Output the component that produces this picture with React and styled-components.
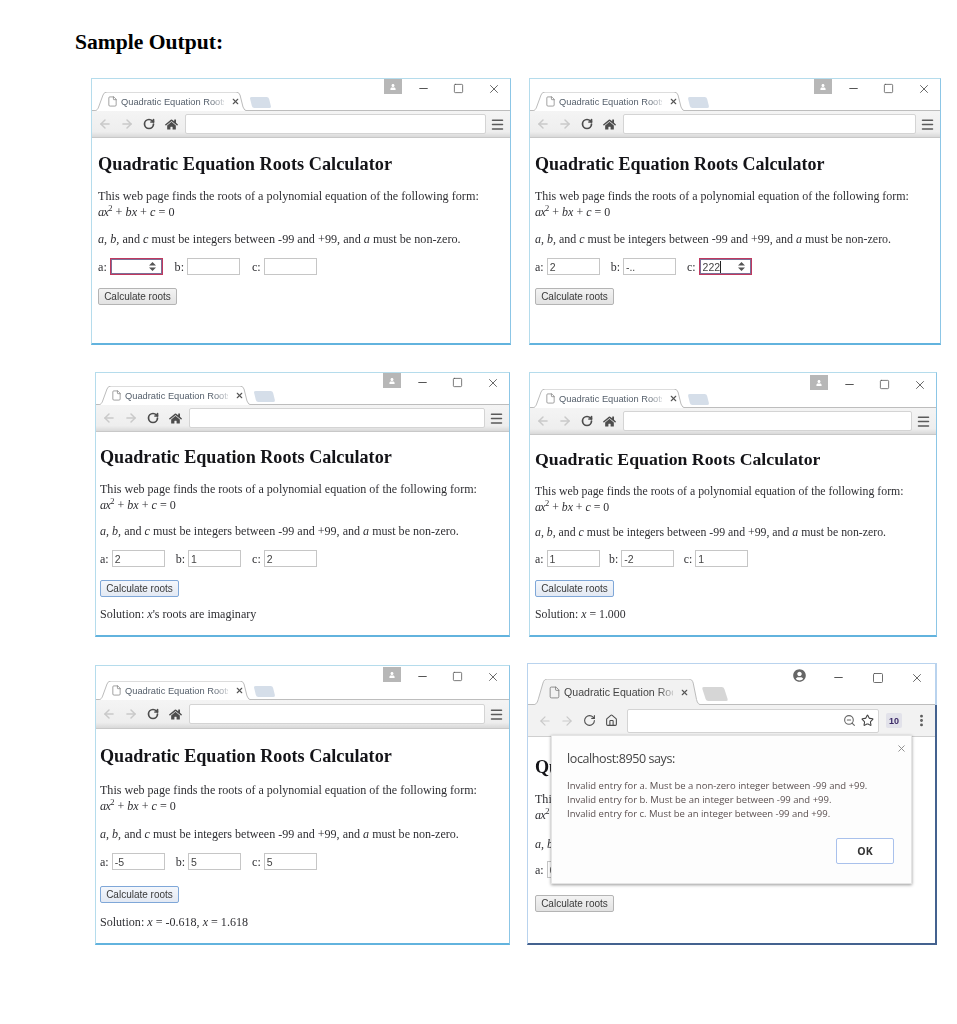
import React from "react";
import styled, { createGlobalStyle } from "styled-components";
import {
  ArrowLeft,
  ArrowRight,
  EllipsisVertical,
  File,
  Home,
  Menu,
  Minus,
  RotateCw,
  Square,
  Star,
  X,
  ZoomOut,
} from "lucide-react";
import { FaHome, FaUser, FaUserCircle } from "react-icons/fa";

const GlobalStyle = createGlobalStyle`
  html, body {
    margin: 0;
    background: #ffffff;
  }
  * {
    box-sizing: border-box;
  }
`;

const Page = styled.div`
  width: 957px;
  height: 1024px;
  overflow: hidden;
  padding-top: 30px;
`;

const SampleTitle = styled.h2`
  margin: 0 0 24px 75px;
  font: bold 21.6px/24px "Liberation Serif", serif;
  color: #000;
`;

const Row = styled.div`
  display: flex;
  align-items: flex-end;
  margin-top: ${(p) => p.$top}px;
  padding-left: ${(p) => p.$left}px;
  gap: ${(p) => p.$gap}px;
`;

const Window = styled.div`
  position: relative;
  flex: none;
  width: ${(p) => p.$width}px;
  height: ${(p) => p.$height}px;
  background: #fff;
  border: 1px solid #b5dcec;
  border-bottom: 2px solid #62b3de;
  border-right-color: #8cc6e6;
  filter: blur(0.5px);
  ${(p) =>
    p.$modern &&
    `
    border-color: #b9d3ee;
    border-right: 2px solid #b9d3ee;
    border-bottom: 2px solid #44628f;
    &::after {
      content: "";
      position: absolute;
      top: 41px;
      right: -2px;
      bottom: -2px;
      width: 2px;
      background: #44628f;
    }
  `}
`;

const TitleBar = styled.div`
  position: relative;
  display: flex;
  align-items: flex-end;
  height: ${(p) => p.$height}px;
  padding-left: ${(p) => (p.$modern ? 4 : 1)}px;
  border-bottom: 1px solid #bdbdbd;
`;

const Tab = styled.div`
  position: relative;
  display: flex;
  align-items: center;
  flex: none;
  width: ${(p) => (p.$modern ? 170 : 155)}px;
  height: ${(p) => (p.$modern ? 26 : 19)}px;
  margin-bottom: -1px;
  padding-left: ${(p) => (p.$modern ? 16 : 14)}px;
  color: ${(p) => (p.$modern ? "#444" : "#56606c")};
  font: ${(p) => (p.$modern ? 10.6 : 9.3)}px "Liberation Sans", sans-serif;
`;

const TabShape = styled.svg`
  position: absolute;
  inset: 0;
  width: 100%;
  height: 100%;
`;

const TabIcon = styled.span`
  position: relative;
  display: flex;
  flex: none;
  margin-right: 3px;
  color: #777;
`;

const TabText = styled.span`
  position: relative;
  flex: none;
  width: ${(p) => (p.$modern ? 109 : 103)}px;
  white-space: nowrap;
  -webkit-mask-image: linear-gradient(to right, #000 86%, rgba(0, 0, 0, 0.25));
  mask-image: linear-gradient(to right, #000 86%, rgba(0, 0, 0, 0.25));
`;

const TabClose = styled.span`
  position: relative;
  display: flex;
  margin-left: 7px;
  color: #555;
`;

const NewTab = styled.div`
  flex: none;
  width: ${(p) => (p.$modern ? 22 : 19)}px;
  height: ${(p) => (p.$modern ? 14 : 11)}px;
  margin: 0 0 ${(p) => (p.$modern ? 3 : 2)}px ${(p) => (p.$modern ? 2 : 3)}px;
  border-radius: 2px;
  background: ${(p) => (p.$modern ? "#d6d6d6" : "#d5dee9")};
  transform: skewX(${(p) => (p.$modern ? 18 : 14)}deg);
`;

const Controls = styled.div`
  position: absolute;
  top: ${(p) => p.$top}px;
  right: -1px;
  display: flex;
  align-items: flex-start;
  height: 24px;
`;

const Avatar = styled.div`
  display: flex;
  align-items: center;
  justify-content: center;
  width: 18px;
  height: 15px;
  margin-right: 4px;
  background: #b7b7b7;
  color: #fff;
`;

const UserButton = styled.div`
  display: flex;
  margin: 5px 13px 0 0;
  color: #666;
`;

const ControlButton = styled.div`
  display: flex;
  align-items: center;
  justify-content: center;
  width: ${(p) => (p.$modern ? 39 : 35)}px;
  height: 19px;
  margin-top: ${(p) => (p.$modern ? 4 : 0)}px;
  color: #555;
`;

const Toolbar = styled.div`
  display: flex;
  align-items: center;
  height: ${(p) => p.$height}px;
  padding: 0 ${(p) => (p.$modern ? "6px" : "5px")} 0 ${(p) => (p.$modern ? "6px" : "2px")};
  background: ${(p) =>
    p.$modern ? "#f2f2f2" : "linear-gradient(#f4f4f4, #eeeeee 80%, #d9d9d9)"};
  border-bottom: 1px solid ${(p) => (p.$modern ? "#cfcfcf" : "#c8c8c8")};
`;

const NavButton = styled.span`
  display: flex;
  flex: none;
  justify-content: center;
  width: 22px;
  color: ${(p) => (p.$muted ? "#c9c9c9" : "#4d4d4d")};
`;

const UrlBar = styled.div`
  display: flex;
  flex: 1;
  align-items: center;
  justify-content: flex-end;
  gap: 5px;
  height: ${(p) => (p.$modern ? 24 : 20)}px;
  margin: 0 ${(p) => (p.$modern ? 7 : 4)}px 0 ${(p) => (p.$modern ? 5 : 3)}px;
  padding-right: 4px;
  background: #fff;
  border: 1px solid #d4d4d4;
  border-radius: 2px;
  color: #666;
`;

const Badge = styled.span`
  display: flex;
  align-items: center;
  justify-content: center;
  flex: none;
  width: 16px;
  height: 15px;
  margin-right: 12px;
  border-radius: 2px;
  background: #e2e2ea;
  color: #3c2a68;
  font: bold 9px "Liberation Sans", sans-serif;
`;

const MenuButton = styled.span`
  display: flex;
  flex: none;
  color: #5a5a5a;
`;

const Content = styled.div`
  padding: ${(p) => p.$top}px 0 0 ${(p) => p.$left}px;
  width: ${(p) => (p.$clip ? "370px" : "auto")};
  overflow: hidden;
  color: #2f2f33;
  font: ${(p) => p.$text}px/16px "Liberation Serif", serif;
`;

const Heading = styled.h1`
  margin: 0;
  color: #141418;
  white-space: nowrap;
  font: bold ${(p) => p.$size}px/22px "Liberation Serif", serif;
`;

const Text = styled.p`
  margin: ${(p) => p.$top}px 0 0;
  white-space: nowrap;
  sup {
    font-size: 8.5px;
    line-height: 0;
  }
`;

const Tight = styled.i`
  letter-spacing: -0.6px;
`;

const FieldRow = styled.div`
  display: flex;
  align-items: center;
  height: 17px;
  margin-top: ${(p) => p.$top}px;
`;

const Label = styled.span`
  margin: 0 3px 0 ${(p) => p.$gap}px;
`;

const FieldBox = styled.div`
  display: flex;
  align-items: center;
  justify-content: space-between;
  flex: none;
  width: 53px;
  height: 17px;
  padding: 0 3px 0 2px;
  background: #fff;
  border: 1px solid #c6c6c6;
  color: #444;
  font: 10.5px "Liberation Sans", sans-serif;
  ${(p) => p.$invalid && "border: 2px solid #c0395f; outline: 1px solid #7d6f96; outline-offset: -2px;"}
`;

const FieldValue = styled.span`
  display: flex;
  align-items: center;
  height: 12px;
  ${(p) => p.$caret && "border-right: 1px solid #222;"}
`;

const Spinner = styled.svg`
  flex: none;
  width: 7px;
  height: 9px;
  margin-right: 2px;
  fill: #555;
`;

const ActionButton = styled.div`
  display: flex;
  align-items: center;
  justify-content: center;
  width: 79px;
  height: 17px;
  margin-top: ${(p) => p.$top}px;
  border: 1px solid ${(p) => (p.$focused ? "#7fa7d8" : "#b4b4b4")};
  border-radius: 2px;
  background: ${(p) =>
    p.$focused ? "linear-gradient(#f4f7fc, #e3e9f3)" : "linear-gradient(#f3f3f3, #e2e2e2)"};
  color: #3a3a3a;
  font: 10px "Liberation Sans", sans-serif;
`;

const Dialog = styled.div`
  position: absolute;
  top: 71px;
  left: 23px;
  width: 361px;
  height: 149px;
  padding: 13px 15px;
  background: #fdfdfd;
  border: 1px solid #e4e4e4;
  box-shadow: 0 1px 3px rgba(0, 0, 0, 0.4);
  color: #5a4f4f;
  font-family: "Open Sans", "Noto Sans", sans-serif;
`;

const DialogClose = styled.span`
  position: absolute;
  top: 7px;
  right: 4px;
  display: flex;
  color: #888;
`;

const DialogTitle = styled.div`
  color: #444;
  font-size: 12.5px;
  line-height: 19px;
  letter-spacing: -0.4px;
`;

const DialogBody = styled.div`
  margin-top: 11px;
  font-size: 9.5px;
  line-height: 14px;
  white-space: nowrap;
`;

const DialogAction = styled.div`
  position: absolute;
  right: 17px;
  bottom: 19px;
  display: flex;
  align-items: center;
  justify-content: center;
  width: 58px;
  height: 26px;
  border: 1px solid #a9c1ec;
  border-radius: 2px;
  background: #fff;
  color: #333;
  font-size: 10.5px;
  font-weight: 700;
`;

const Formula = () => (
  <>
    <Tight>ax</Tight>
    <sup>2</sup> + <i>bx</i> + <i>c</i> = 0
  </>
);

const Field = ({ label, value, gap, invalid, spin, caret }) => (
  <>
    <Label $gap={gap}>{label}:</Label>
    <FieldBox $invalid={invalid}>
      <FieldValue $caret={caret}>{value}</FieldValue>
      {spin && (
        <Spinner viewBox="0 0 7 9">
          <path d="M3.5 0 7 3.6H0zM3.5 9 0 5.4h7z" />
        </Spinner>
      )}
    </FieldBox>
  </>
);

const TabOutline = ({ modern }) => (
  <TabShape viewBox="0 0 155 19" preserveAspectRatio="none">
    <path
      d="M0 19C4 19 5 17 6 14L10 3Q11 0 14 0H143Q146 0 147 3L150 15Q151 19 155 19"
      fill={modern ? "#f2f2f2" : "#fff"}
      stroke="#bcbcbc"
      vectorEffect="non-scaling-stroke"
    />
  </TabShape>
);

const ClassicBar = ({ height }) => (
  <Toolbar $height={height}>
    <NavButton $muted><ArrowLeft size={14} strokeWidth={2.5} /></NavButton>
    <NavButton $muted><ArrowRight size={14} strokeWidth={2.5} /></NavButton>
    <NavButton><RotateCw size={12} strokeWidth={3.4} /></NavButton>
    <NavButton><FaHome size={13} /></NavButton>
    <UrlBar />
    <MenuButton><Menu size={15} strokeWidth={2.4} /></MenuButton>
  </Toolbar>
);

const ModernBar = ({ height }) => (
  <Toolbar $height={height} $modern>
    <NavButton $muted><ArrowLeft size={14} /></NavButton>
    <NavButton $muted><ArrowRight size={14} /></NavButton>
    <NavButton><RotateCw size={13} /></NavButton>
    <NavButton><Home size={13} /></NavButton>
    <UrlBar $modern>
      <ZoomOut size={13} />
      <Star size={13} color="#444" />
    </UrlBar>
    <Badge>10</Badge>
    <MenuButton><EllipsisVertical size={15} strokeWidth={2.6} /></MenuButton>
  </Toolbar>
);

const Browser = ({
  width,
  height,
  modern,
  head,
  bar,
  left,
  gaps,
  text = 12.07,
  title = 18.15,
  labelGap = 11,
  fields,
  focused,
  solution,
  clip,
  children,
}) => (
  <Window $width={width} $height={height} $modern={modern}>
    <TitleBar $height={head} $modern={modern}>
      <Tab $modern={modern}>
        <TabOutline modern={modern} />
        <TabIcon><File size={modern ? 13 : 11} strokeWidth={1.5} /></TabIcon>
        <TabText $modern={modern}>{modern ? "Quadratic Equation Root" : "Quadratic Equation Roots"}</TabText>
        <TabClose><X size={9} strokeWidth={3} /></TabClose>
      </Tab>
      <NewTab $modern={modern} />
      <Controls $top={modern ? 0 : Math.max(head - 33, 0)}>
        {modern ? (
          <UserButton><FaUserCircle size={13} /></UserButton>
        ) : (
          <Avatar><FaUser size={6} /></Avatar>
        )}
        <ControlButton $modern={modern}><Minus size={13} /></ControlButton>
        <ControlButton $modern={modern}><Square size={modern ? 12 : 11} strokeWidth={1.7} /></ControlButton>
        <ControlButton $modern={modern}><X size={14} strokeWidth={1.5} /></ControlButton>
      </Controls>
    </TitleBar>
    {modern ? <ModernBar height={bar} /> : <ClassicBar height={bar} />}
    <Content $top={gaps.h1} $left={left} $clip={clip} $text={text}>
      <Heading $size={title}>Quadratic Equation Roots Calculator</Heading>
      <Text $top={gaps.p}>
        This web page finds the roots of a polynomial equation of the following form:
        <br />
        <Formula />
      </Text>
      <Text $top={gaps.rule}>
        <i>a</i>, <i>b</i>, and <i>c</i> must be integers between -99 and +99, and <i>a</i> must be non-zero.
      </Text>
      <FieldRow $top={gaps.fields}>
        {fields.map((f, i) => (
          <Field key={f.label} gap={i === 0 ? 0 : labelGap} {...f} />
        ))}
      </FieldRow>
      <ActionButton $top={gaps.btn} $focused={focused}>Calculate roots</ActionButton>
      {solution && <Text $top={gaps.sol}>{solution}</Text>}
    </Content>
    {children}
  </Window>
);

const fieldsOf = (a, b, c) => [
  { label: "a", value: a },
  { label: "b", value: b },
  { label: "c", value: c },
];

const firstGaps = { h1: 15, p: 13, rule: 11, fields: 11, btn: 13 };

export default function App() {
  return (
    <Page>
      <GlobalStyle />
      <SampleTitle>Sample Output:</SampleTitle>
      <Row $top={0} $left={91} $gap={18}>
        <Browser
          width={420}
          height={267}
          head={32}
          bar={27}
          left={6}
          text={12.2}
          title={18.3}
          labelGap={11.8}
          gaps={firstGaps}
          fields={[{ label: "a", value: "", invalid: true, spin: true }, { label: "b", value: "" }, { label: "c", value: "" }]}
        />
        <Browser
          width={412}
          height={267}
          head={32}
          bar={27}
          left={5}
          text={11.97}
          title={18}
          gaps={firstGaps}
          fields={[{ label: "a", value: "2" }, { label: "b", value: "-.." }, { label: "c", value: "222", invalid: true, spin: true, caret: true }]}
        />
      </Row>
      <Row $top={27} $left={95} $gap={19}>
        <Browser
          width={415}
          height={265}
          head={32}
          bar={27}
          left={4}
          gaps={{ h1: 14, p: 13, rule: 10, fields: 11, btn: 13, sol: 9 }}
          fields={fieldsOf("2", "1", "2")}
          focused
          solution={<>Solution: <i>x</i>'s roots are imaginary</>}
        />
        <Browser
          width={408}
          height={265}
          head={35}
          bar={27}
          left={5}
          text={11.8}
          title={17.75}
          labelGap={9.5}
          gaps={{ h1: 13, p: 13, rule: 9, fields: 10, btn: 13, sol: 9 }}
          fields={fieldsOf("1", "-2", "1")}
          focused
          solution={<>Solution: <i>x</i> = 1.000</>}
        />
      </Row>
      <Row $top={26} $left={95} $gap={17}>
        <Browser
          width={415}
          height={280}
          head={34}
          bar={29}
          left={4}
          gaps={{ h1: 16, p: 15, rule: 12, fields: 11, btn: 16, sol: 11 }}
          fields={fieldsOf("-5", "5", "5")}
          focused
          solution={<>Solution: <i>x</i> = -0.618, <i>x</i> = 1.618</>}
        />
        <Browser
          modern
          clip
          width={410}
          height={282}
          head={41}
          bar={32}
          left={7}
          gaps={{ h1: 19, p: 13, rule: 13, fields: 9, btn: 17 }}
          fields={fieldsOf("0", "", "")}
        >
          <Dialog>
            <DialogClose><X size={11} /></DialogClose>
            <DialogTitle>localhost:8950 says:</DialogTitle>
            <DialogBody>
              Invalid entry for a. Must be a non-zero integer between -99 and +99.
              <br />
              Invalid entry for b. Must be an integer between -99 and +99.
              <br />
              Invalid entry for c. Must be an integer between -99 and +99.
            </DialogBody>
            <DialogAction>OK</DialogAction>
          </Dialog>
        </Browser>
      </Row>
    </Page>
  );
}
